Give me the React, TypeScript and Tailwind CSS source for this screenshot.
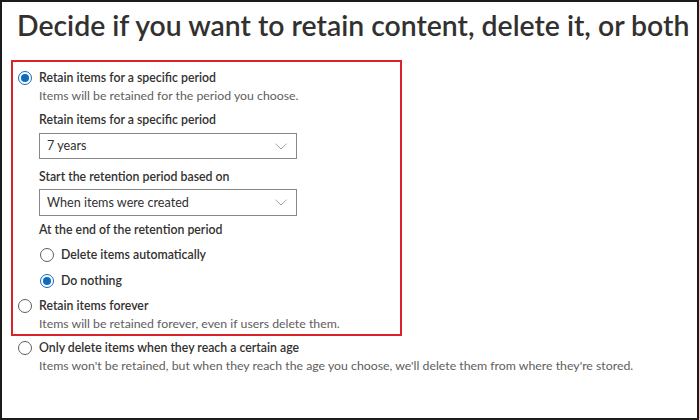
const font = { fontFamily: "Lato, 'Open Sans', 'Liberation Sans', sans-serif" };

function Radio({ checked }: { checked?: boolean }) {
  return (
    <span
      className={
        "flex size-[14px] shrink-0 items-center justify-center rounded-full border " +
        (checked ? "border-[#0f6cbd]" : "border-[#605e5c]")
      }
    >
      {checked ? <span className="size-[8px] rounded-full bg-[#0f6cbd]" /> : null}
    </span>
  );
}

function Chevron() {
  return (
    <svg width="12" height="7" viewBox="0 0 12 7" fill="none" aria-hidden>
      <path d="M0.5 0.8 L6 6 L11.5 0.8" stroke="#a19f9d" strokeWidth="1" />
    </svg>
  );
}

function Select({ value, className }: { value: string; className?: string }) {
  return (
    <div
      className={
        "flex w-[258px] items-center justify-between border border-[#8a8886] pl-[7px] pr-[9px] text-[12.6px] text-[#323130] " +
        (className ?? "")
      }
    >
      <span>{value}</span>
      <Chevron />
    </div>
  );
}

export default function App() {
  return (
    <div
      style={font}
      className="h-[420px] w-[699px] overflow-hidden border-2 border-[#1b1b1b] bg-white text-[#323130]"
    >
      <h1 className="whitespace-nowrap pl-[15px] pt-[6px] text-[28.4px] font-semibold leading-[34px]">
        Decide if you want to retain content, delete it, or both
      </h1>

      <div className="ml-[9px] mt-[18px] w-[391px] border-2 border-[#d9232a] pb-[2px] pl-[5px] pt-[7px] text-[12.3px] leading-[18px]">
        <div className="flex items-center gap-[7px]">
          <Radio checked />
          <span className="font-semibold">Retain items for a specific period</span>
        </div>
        <div className="pl-[21px]">
          <p className="text-[#605e5c]">Items will be retained for the period you choose.</p>
          <p className="mt-[6px] font-semibold">Retain items for a specific period</p>
          <Select value="7 years" className="mt-[4px] h-[26px]" />
          <p className="mt-[9px] font-semibold">Start the retention period based on</p>
          <Select value="When items were created" className="mt-[3px] h-[27px]" />
          <p className="mt-[5px] font-semibold">At the end of the retention period</p>
          <div className="mt-[7px] flex items-center gap-[7px] pl-[1px]">
            <Radio />
            <span className="font-semibold">Delete items automatically</span>
          </div>
          <div className="mt-[8px] flex items-center gap-[7px] pl-[1px]">
            <Radio checked />
            <span className="font-semibold">Do nothing</span>
          </div>
        </div>
        <div className="mt-[7px] flex items-center gap-[7px]">
          <Radio />
          <span className="font-semibold">Retain items forever</span>
        </div>
        <p className="pl-[21px] leading-[17px] text-[#605e5c]">
          Items will be retained forever, even if users delete them.
        </p>
      </div>

      <div className="mt-[3px] pl-[16px] text-[12.3px] leading-[18px]">
        <div className="flex items-center gap-[7px]">
          <Radio />
          <span className="font-semibold">Only delete items when they reach a certain age</span>
        </div>
        <p className="whitespace-nowrap pl-[21px] text-[#605e5c]">
          Items won't be retained, but when they reach the age you choose, we'll delete them from
          where they're stored.
        </p>
      </div>
    </div>
  );
}
